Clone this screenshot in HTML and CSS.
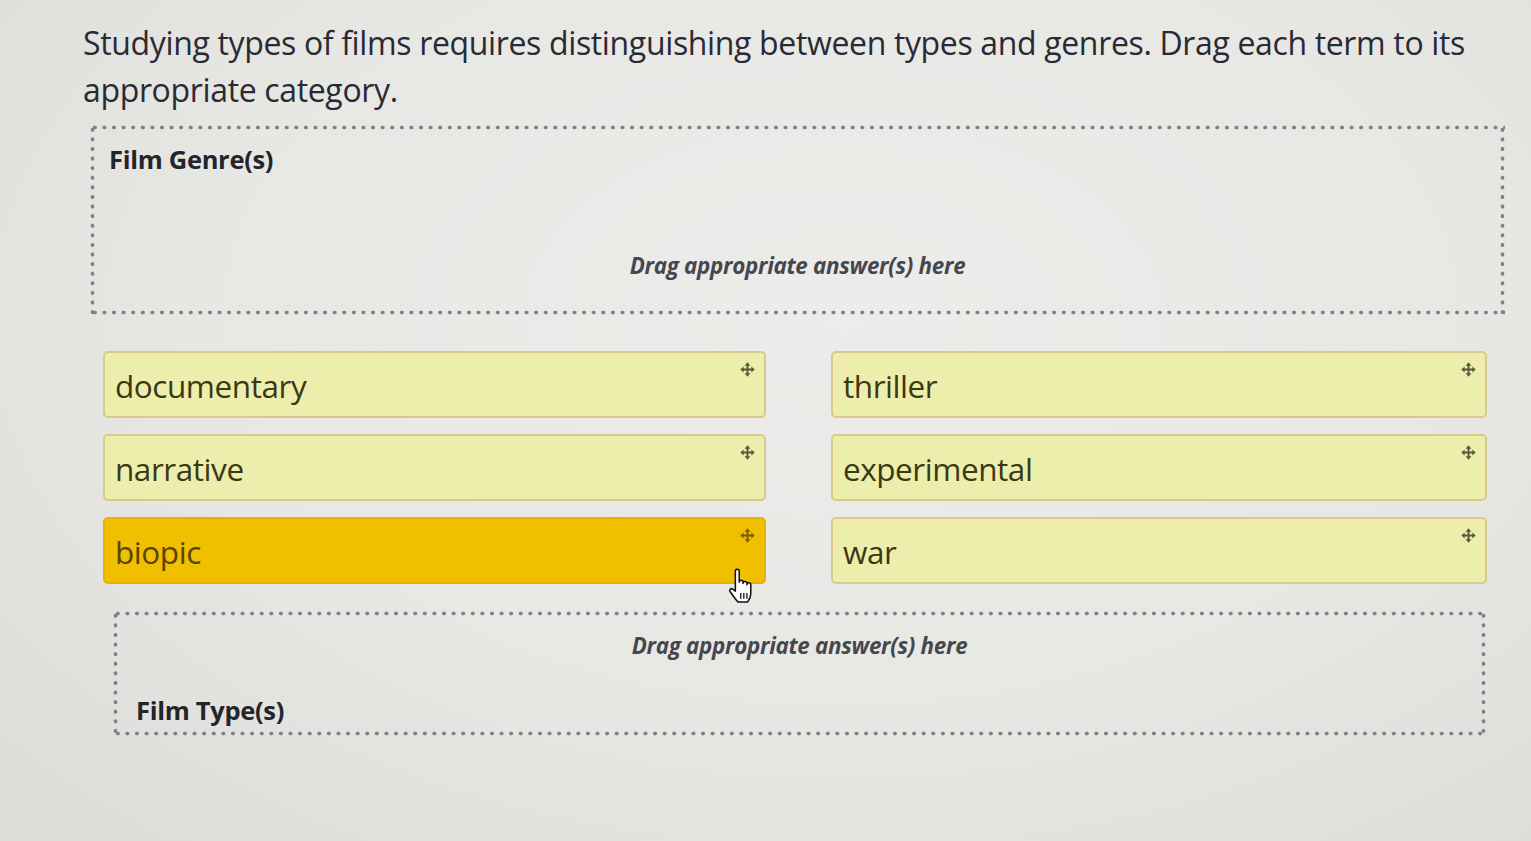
FILE: index.html
```html
<!DOCTYPE html>
<html lang="en">
<head>
<meta charset="utf-8">
<title>Film types and genres</title>
<link rel="stylesheet" href="styles.css">
</head>
<body>
<main class="page">
  <h1 class="prompt">Studying types of films requires distinguishing between types and genres. Drag each term to its appropriate category.</h1>

  <section class="zone zone-genre">
    <h2 class="zone-label">Film Genre(s)</h2>
    <p class="zone-hint">Drag appropriate answer(s) here</p>
  </section>

  <div class="bank">
    <div class="term"><span>documentary</span><svg class="move" viewBox="0 0 14 14"><path d="M7 2.5v9M2.5 7h9" stroke="currentColor" stroke-width="1.8"/><path d="M7 0.3l2.7 3.1h-5.4zM7 13.7l2.7-3.1h-5.4zM0.3 7l3.1-2.7v5.4zM13.7 7l-3.1-2.7v5.4z" fill="currentColor"/></svg></div>
    <div class="term"><span>thriller</span><svg class="move" viewBox="0 0 14 14"><path d="M7 2.5v9M2.5 7h9" stroke="currentColor" stroke-width="1.8"/><path d="M7 0.3l2.7 3.1h-5.4zM7 13.7l2.7-3.1h-5.4zM0.3 7l3.1-2.7v5.4zM13.7 7l-3.1-2.7v5.4z" fill="currentColor"/></svg></div>
    <div class="term"><span>narrative</span><svg class="move" viewBox="0 0 14 14"><path d="M7 2.5v9M2.5 7h9" stroke="currentColor" stroke-width="1.8"/><path d="M7 0.3l2.7 3.1h-5.4zM7 13.7l2.7-3.1h-5.4zM0.3 7l3.1-2.7v5.4zM13.7 7l-3.1-2.7v5.4z" fill="currentColor"/></svg></div>
    <div class="term"><span>experimental</span><svg class="move" viewBox="0 0 14 14"><path d="M7 2.5v9M2.5 7h9" stroke="currentColor" stroke-width="1.8"/><path d="M7 0.3l2.7 3.1h-5.4zM7 13.7l2.7-3.1h-5.4zM0.3 7l3.1-2.7v5.4zM13.7 7l-3.1-2.7v5.4z" fill="currentColor"/></svg></div>
    <div class="term term-active"><span>biopic</span><svg class="move" viewBox="0 0 14 14"><path d="M7 2.5v9M2.5 7h9" stroke="currentColor" stroke-width="1.8"/><path d="M7 0.3l2.7 3.1h-5.4zM7 13.7l2.7-3.1h-5.4zM0.3 7l3.1-2.7v5.4zM13.7 7l-3.1-2.7v5.4z" fill="currentColor"/></svg>
      <svg class="cursor" viewBox="0 0 20 28"><path d="M6 2.5a1.5 1.5 0 0 1 3 0V11a1.5 1.5 0 0 1 3 0v1a1.5 1.5 0 0 1 3 0v1a1.5 1.5 0 0 1 3 0v7c0 3-1.5 5-2.5 6.5H8c-1.5-2-4-5-6-8a1.4 1.4 0 0 1 2-2L6 18z" fill="#fff" stroke="#111" stroke-width="1.2" stroke-linejoin="round"/><path d="M10.2 19.5v4.5M12.6 19.5v4.5M15 19.5v4.5" stroke="#111" stroke-width="1"/></svg>
    </div>
    <div class="term"><span>war</span><svg class="move" viewBox="0 0 14 14"><path d="M7 2.5v9M2.5 7h9" stroke="currentColor" stroke-width="1.8"/><path d="M7 0.3l2.7 3.1h-5.4zM7 13.7l2.7-3.1h-5.4zM0.3 7l3.1-2.7v5.4zM13.7 7l-3.1-2.7v5.4z" fill="currentColor"/></svg></div>
  </div>

  <section class="zone zone-type">
    <p class="zone-hint">Drag appropriate answer(s) here</p>
    <h2 class="zone-label">Film Type(s)</h2>
  </section>
</main>
</body>
</html>
```

FILE: styles.css
```css
html, body {
  margin: 0;
  height: 100%;
}

body {
  font-family: "Open Sans", "Noto Sans", sans-serif;
  color: #2a2b33;
  background: radial-gradient(ellipse 75% 85% at 55% 38%, #ececea 0%, #e7e7e4 55%, #dcdcd8 100%);
  overflow: hidden;
}

.page {
  padding: 19px 0 0 83px;
  width: 1430px;
  display: flex;
  flex-direction: column;
}

.prompt {
  margin: 0;
  width: 1420px;
  font-size: 32px;
  line-height: 47px;
  font-weight: 400;
  letter-spacing: -0.35px;
  color: #292a34;
}

.zone {
  --dot: radial-gradient(circle, #7a7e8b 1.6px, transparent 2.2px);
  background-image: var(--dot), var(--dot), var(--dot), var(--dot);
  background-repeat: repeat-x, repeat-x, repeat-y, repeat-y;
  background-size: 9.6px 5px, 9.6px 5px, 5px 9.6px, 5px 9.6px;
  background-position: 0 0, 0 100%, 0 0, 100% 0;
  display: flex;
  flex-direction: column;
  box-sizing: border-box;
}

.zone-genre {
  margin: 12px 0 0 7px;
  width: 1415px;
  height: 190px;
  padding: 19px 19px 0;
}

.zone-type {
  margin: 27px 0 0 30px;
  width: 1373px;
  height: 125px;
  padding: 21px 23px 0;
}

.zone-label {
  margin: 0;
  font-size: 25.5px;
  line-height: 30px;
  font-weight: 700;
  color: #24252b;
  letter-spacing: -0.3px;
}

.zone-hint {
  margin: 0;
  text-align: center;
  font-size: 22.4px;
  line-height: 28px;
  font-weight: 700;
  font-style: italic;
  color: #46474d;
  letter-spacing: -0.3px;
}

.zone-genre .zone-hint {
  margin-top: 78px;
}

.zone-type .zone-hint {
  margin-bottom: 35px;
}

.bank {
  margin: 36px 0 0 20px;
  display: grid;
  grid-template-columns: 663px 656px;
  grid-auto-rows: 67px;
  column-gap: 65px;
  row-gap: 16px;
}

.term {
  position: relative;
  box-sizing: border-box;
  border: 2px solid #d9c98e;
  border-radius: 5px;
  background: #eeeeac;
  display: flex;
  align-items: center;
  padding: 2px 0 0 10px;
  font-size: 31.5px;
  letter-spacing: -0.45px;
  color: #3a3914;
}

.term-active {
  background: #f0bf00;
  border-color: #e6b200;
  color: #5a4300;
}

.move {
  position: absolute;
  top: 9px;
  right: 9px;
  width: 15px;
  height: 15px;
  color: #565a3a;
}

.term-active .move {
  color: #7a5a10;
}

.cursor {
  position: absolute;
  left: 622px;
  top: 49px;
  width: 27px;
  height: 36px;
}
```
